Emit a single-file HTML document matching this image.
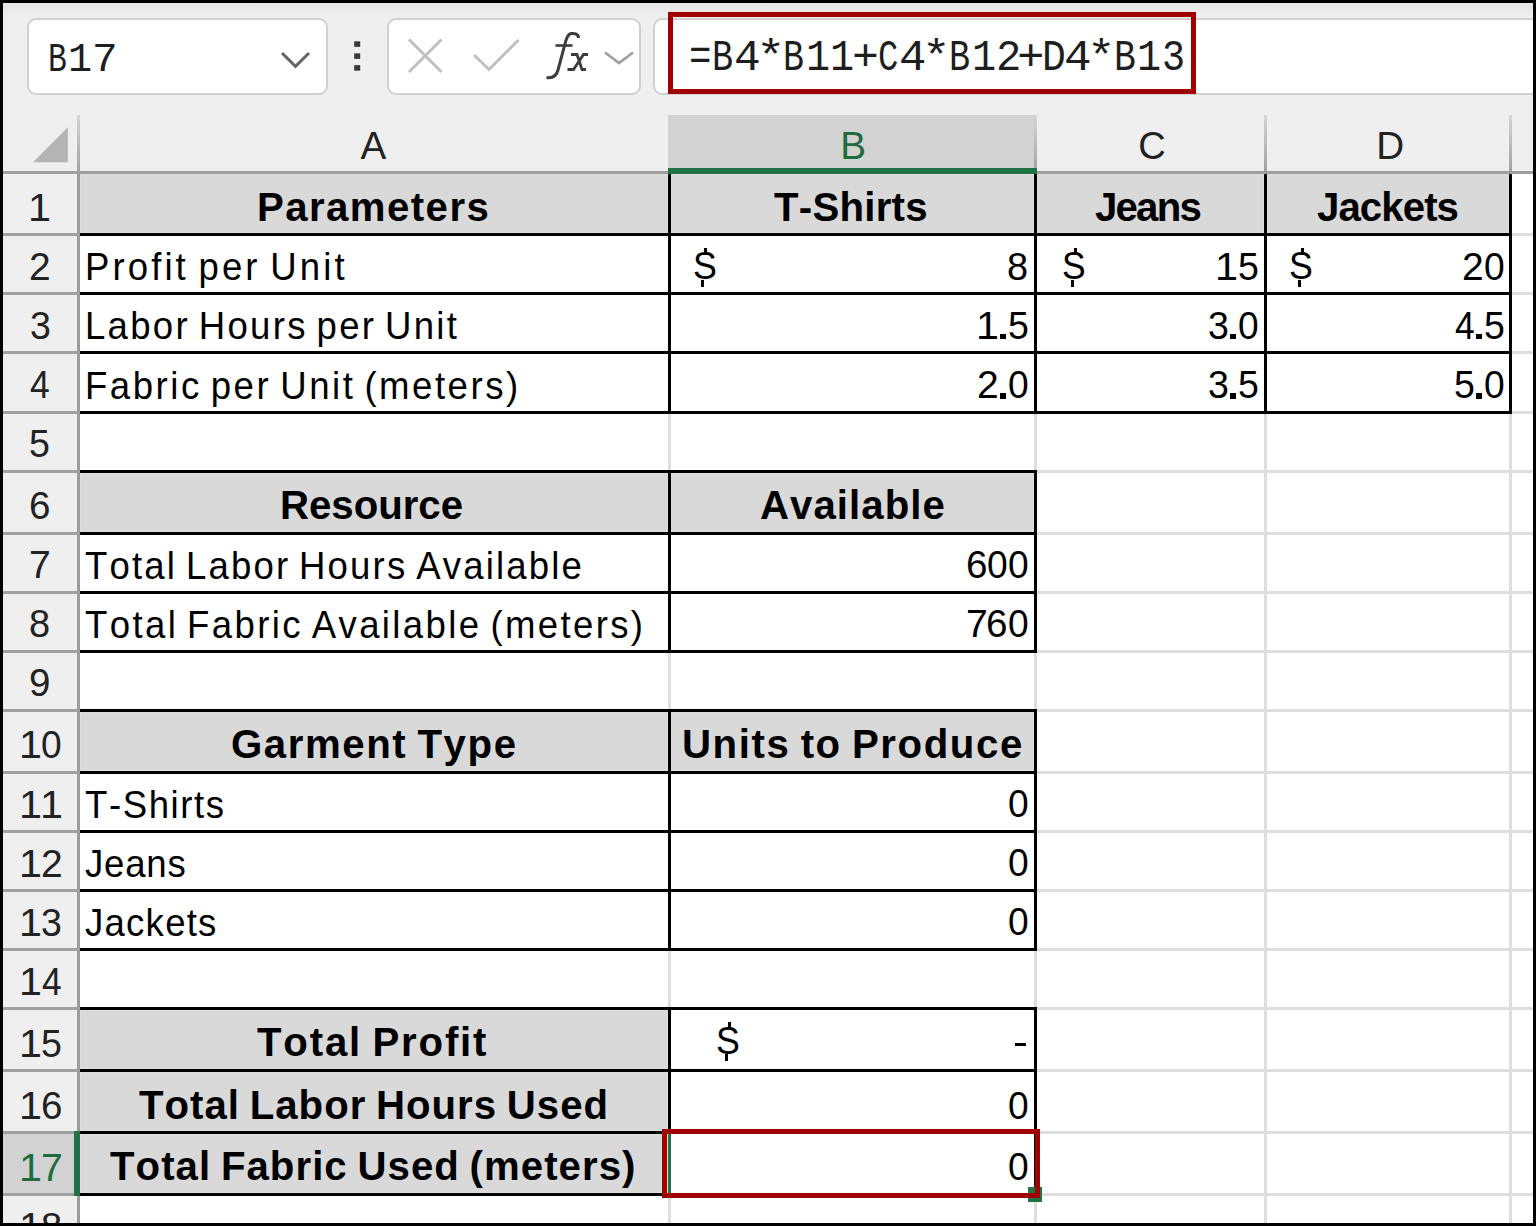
<!DOCTYPE html><html><head><meta charset="utf-8"><style>
html,body{margin:0;padding:0;}
body{width:1536px;height:1226px;background:#000;position:relative;overflow:hidden;font-family:"Liberation Sans",sans-serif;}
.r{position:absolute;}
.t{position:absolute;white-space:nowrap;transform-origin:0 0;font-kerning:none;font-variant-ligatures:none;}
.b{font-weight:bold;}
</style></head><body><div class="r" style="left:3.00px;top:3.00px;width:1530.00px;height:112.00px;background:#efefef;"></div><div class="r" style="left:3.00px;top:3.00px;width:1530.00px;height:14.00px;background:linear-gradient(#e6e6e6,#efefef);"></div><div class="r" style="left:26.90px;top:17.80px;width:300.80px;height:77.00px;background:#fff;border:2.8px solid #d0d0d0;box-sizing:border-box;border-radius:9px;"></div><span class="t" style="left:47.61px;top:39.94px;font-family:'Liberation Mono';font-weight:normal;font-size:40.53px;line-height:40.53px;color:#1e1e1e;transform:scaleX(0.7757);">B</span><span class="t" style="left:67.59px;top:39.94px;font-family:'Liberation Mono';font-weight:normal;font-size:40.53px;line-height:40.53px;color:#1e1e1e;transform:scaleX(0.9930);">1</span><span class="t" style="left:92.19px;top:39.94px;font-family:'Liberation Mono';font-weight:normal;font-size:40.53px;line-height:40.53px;color:#1e1e1e;transform:scaleX(1.0593);">7</span><svg class="r" style="left:0;top:0" width="700" height="110"><polyline points="282,53 295.5,66.3 309,53" fill="none" stroke="#666" stroke-width="3"/><rect x="354.2" y="41.3" width="6" height="5.6" fill="#3a3a3a"/><rect x="354.2" y="53.3" width="6" height="5.6" fill="#3a3a3a"/><rect x="354.2" y="65.1" width="6" height="5.6" fill="#3a3a3a"/></svg><div class="r" style="left:387.10px;top:17.80px;width:253.70px;height:77.00px;background:#fff;border:2.8px solid #d0d0d0;box-sizing:border-box;border-radius:9px;"></div><svg class="r" style="left:0;top:0" width="700" height="110"><path d="M409,39.5 L441.5,72 M441.5,39.5 L409,72" stroke="#c0c0c0" stroke-width="3" fill="none"/><polyline points="474,55 489,69.5 518.5,40" stroke="#c0c0c0" stroke-width="3" fill="none"/><polyline points="605,52.5 619,63 633,52.5" stroke="#a0a0a0" stroke-width="2.8" fill="none"/></svg><svg class="r" style="left:0;top:0" width="700" height="110" fill="none" stroke="#3c3c3c" stroke-width="3"><path d="M578.5,38 C578.5,34 575,33 571,33.5 C567.5,34.5 566.5,38 565.5,42 L558,70 C556.5,76 553,78.5 546.5,77.5"/><path d="M555.5,45.5 L572.5,45.5" stroke-width="2.6"/><path d="M571,54.5 L577,54.5 L582,69.5 L586,69.5 M588,54.5 L583.5,54.5 L573.5,69.5 L567.5,69.5" stroke-width="2.8"/></svg><div class="r" style="left:653.10px;top:17.80px;width:891.90px;height:77.00px;background:#fff;border:2.8px solid #d0d0d0;box-sizing:border-box;border-radius:9px;"></div><span class="t" style="left:688.98px;top:36.31px;font-family:'Liberation Mono';font-weight:normal;font-size:44.48px;line-height:44.48px;color:#1e1e1e;transform:scaleX(0.8422);">=</span><span class="t" style="left:712.42px;top:36.31px;font-family:'Liberation Mono';font-weight:normal;font-size:44.48px;line-height:44.48px;color:#1e1e1e;transform:scaleX(0.7906);">B</span><span class="t" style="left:734.06px;top:36.31px;font-family:'Liberation Mono';font-weight:normal;font-size:44.48px;line-height:44.48px;color:#1e1e1e;transform:scaleX(1.0001);">4</span><span class="t" style="left:756.04px;top:36.31px;font-family:'Liberation Mono';font-weight:normal;font-size:44.48px;line-height:44.48px;color:#1e1e1e;transform:scaleX(1.1070);">*</span><span class="t" style="left:783.33px;top:36.31px;font-family:'Liberation Mono';font-weight:normal;font-size:44.48px;line-height:44.48px;color:#1e1e1e;transform:scaleX(0.7860);">B</span><span class="t" style="left:805.99px;top:36.31px;font-family:'Liberation Mono';font-weight:normal;font-size:44.48px;line-height:44.48px;color:#1e1e1e;transform:scaleX(0.9049);">1</span><span class="t" style="left:830.09px;top:36.31px;font-family:'Liberation Mono';font-weight:normal;font-size:44.48px;line-height:44.48px;color:#1e1e1e;transform:scaleX(0.9049);">1</span><span class="t" style="left:852.06px;top:36.31px;font-family:'Liberation Mono';font-weight:normal;font-size:44.48px;line-height:44.48px;color:#1e1e1e;transform:scaleX(1.0087);">+</span><span class="t" style="left:878.03px;top:36.31px;font-family:'Liberation Mono';font-weight:normal;font-size:44.48px;line-height:44.48px;color:#1e1e1e;transform:scaleX(0.7606);">C</span><span class="t" style="left:899.30px;top:36.31px;font-family:'Liberation Mono';font-weight:normal;font-size:44.48px;line-height:44.48px;color:#1e1e1e;transform:scaleX(1.0271);">4</span><span class="t" style="left:922.24px;top:36.31px;font-family:'Liberation Mono';font-weight:normal;font-size:44.48px;line-height:44.48px;color:#1e1e1e;transform:scaleX(1.0693);">*</span><span class="t" style="left:948.62px;top:36.31px;font-family:'Liberation Mono';font-weight:normal;font-size:44.48px;line-height:44.48px;color:#1e1e1e;transform:scaleX(0.7906);">B</span><span class="t" style="left:971.89px;top:36.31px;font-family:'Liberation Mono';font-weight:normal;font-size:44.48px;line-height:44.48px;color:#1e1e1e;transform:scaleX(0.9049);">1</span><span class="t" style="left:995.83px;top:36.31px;font-family:'Liberation Mono';font-weight:normal;font-size:44.48px;line-height:44.48px;color:#1e1e1e;transform:scaleX(0.9502);">2</span><span class="t" style="left:1016.81px;top:36.31px;font-family:'Liberation Mono';font-weight:normal;font-size:44.48px;line-height:44.48px;color:#1e1e1e;transform:scaleX(1.0272);">+</span><span class="t" style="left:1042.05px;top:36.31px;font-family:'Liberation Mono';font-weight:normal;font-size:44.48px;line-height:44.48px;color:#1e1e1e;transform:scaleX(0.8940);">D</span><span class="t" style="left:1064.49px;top:36.31px;font-family:'Liberation Mono';font-weight:normal;font-size:44.48px;line-height:44.48px;color:#1e1e1e;transform:scaleX(1.0316);">4</span><span class="t" style="left:1087.44px;top:36.31px;font-family:'Liberation Mono';font-weight:normal;font-size:44.48px;line-height:44.48px;color:#1e1e1e;transform:scaleX(1.0693);">*</span><span class="t" style="left:1113.72px;top:36.31px;font-family:'Liberation Mono';font-weight:normal;font-size:44.48px;line-height:44.48px;color:#1e1e1e;transform:scaleX(0.8185);">B</span><span class="t" style="left:1137.19px;top:36.31px;font-family:'Liberation Mono';font-weight:normal;font-size:44.48px;line-height:44.48px;color:#1e1e1e;transform:scaleX(0.9049);">1</span><span class="t" style="left:1161.70px;top:36.31px;font-family:'Liberation Mono';font-weight:normal;font-size:44.48px;line-height:44.48px;color:#1e1e1e;transform:scaleX(0.8630);">3</span><div class="r" style="left:667.50px;top:11.70px;width:528.70px;height:82.70px;background:transparent;border:5.8px solid #a00000;box-sizing:border-box;"></div><div class="r" style="left:3.00px;top:115.00px;width:1530.00px;height:57.50px;background:#efefef;"></div><div class="r" style="left:667.60px;top:115.00px;width:369.40px;height:57.50px;background:#d2d2d2;"></div><div class="r" style="left:1034.00px;top:115.00px;width:3.00px;height:57.50px;background:linear-gradient(#d6d6d6,#a0a0a0);"></div><div class="r" style="left:1264.10px;top:115.00px;width:3.00px;height:57.50px;background:linear-gradient(#d6d6d6,#a0a0a0);"></div><div class="r" style="left:1509.30px;top:115.00px;width:3.00px;height:57.50px;background:linear-gradient(#d6d6d6,#a0a0a0);"></div><svg class="r" style="left:0;top:110px" width="80" height="60"><polygon points="67.9,17.3 67.9,52.2 33,52.2" fill="#b4b4b4"/></svg><div class="r" style="left:3.00px;top:171.00px;width:1530.00px;height:3.00px;background:#9f9f9f;"></div><div class="r" style="left:667.60px;top:168.40px;width:369.40px;height:5.80px;background:#217346;"></div><span class="t" style="left:360.61px;top:126.86px;font-family:'Liberation Sans';font-weight:normal;font-size:38.66px;line-height:38.66px;color:#222;transform:scaleX(1.0000);">A</span><span class="t" style="left:840.34px;top:126.86px;font-family:'Liberation Sans';font-weight:normal;font-size:38.66px;line-height:38.66px;color:#1d6b3e;transform:scaleX(1.0000);">B</span><span class="t" style="left:1138.20px;top:127.04px;font-family:'Liberation Sans';font-weight:normal;font-size:38.10px;line-height:38.10px;color:#222;transform:scaleX(1.0000);">C</span><span class="t" style="left:1376.18px;top:126.86px;font-family:'Liberation Sans';font-weight:normal;font-size:38.66px;line-height:38.66px;color:#222;transform:scaleX(1.0000);">D</span><div class="r" style="left:79.80px;top:174.00px;width:1453.20px;height:1049.00px;background:#ffffff;"></div><div class="r" style="left:3.00px;top:174.00px;width:73.80px;height:1049.00px;background:#efefef;"></div><div class="r" style="left:3.00px;top:1132.80px;width:76.80px;height:61.80px;background:#d2d2d2;"></div><div class="r" style="left:3.00px;top:233.20px;width:75.30px;height:3.00px;background:#a0a0a0;"></div><div class="r" style="left:3.00px;top:292.30px;width:75.30px;height:3.00px;background:#a0a0a0;"></div><div class="r" style="left:3.00px;top:351.30px;width:75.30px;height:3.00px;background:#a0a0a0;"></div><div class="r" style="left:3.00px;top:410.70px;width:75.30px;height:3.00px;background:#a0a0a0;"></div><div class="r" style="left:3.00px;top:469.70px;width:75.30px;height:3.00px;background:#a0a0a0;"></div><div class="r" style="left:3.00px;top:531.70px;width:75.30px;height:3.00px;background:#a0a0a0;"></div><div class="r" style="left:3.00px;top:590.70px;width:75.30px;height:3.00px;background:#a0a0a0;"></div><div class="r" style="left:3.00px;top:650.00px;width:75.30px;height:3.00px;background:#a0a0a0;"></div><div class="r" style="left:3.00px;top:709.00px;width:75.30px;height:3.00px;background:#a0a0a0;"></div><div class="r" style="left:3.00px;top:771.00px;width:75.30px;height:3.00px;background:#a0a0a0;"></div><div class="r" style="left:3.00px;top:830.10px;width:75.30px;height:3.00px;background:#a0a0a0;"></div><div class="r" style="left:3.00px;top:889.10px;width:75.30px;height:3.00px;background:#a0a0a0;"></div><div class="r" style="left:3.00px;top:948.10px;width:75.30px;height:3.00px;background:#a0a0a0;"></div><div class="r" style="left:3.00px;top:1007.10px;width:75.30px;height:3.00px;background:#a0a0a0;"></div><div class="r" style="left:3.00px;top:1069.10px;width:75.30px;height:3.00px;background:#a0a0a0;"></div><div class="r" style="left:3.00px;top:1131.30px;width:75.30px;height:3.00px;background:#a0a0a0;"></div><div class="r" style="left:3.00px;top:1193.10px;width:75.30px;height:3.00px;background:#a0a0a0;"></div><div class="r" style="left:76.80px;top:172.50px;width:3.00px;height:1050.50px;background:#9c9c9c;"></div><div class="r" style="left:76.80px;top:115.00px;width:3.00px;height:57.50px;background:linear-gradient(#d6d6d6,#a0a0a0);"></div><div class="r" style="left:79.80px;top:233.20px;width:1453.20px;height:3.00px;background:#dedede;"></div><div class="r" style="left:79.80px;top:292.30px;width:1453.20px;height:3.00px;background:#dedede;"></div><div class="r" style="left:79.80px;top:351.30px;width:1453.20px;height:3.00px;background:#dedede;"></div><div class="r" style="left:79.80px;top:410.70px;width:1453.20px;height:3.00px;background:#dedede;"></div><div class="r" style="left:79.80px;top:469.70px;width:1453.20px;height:3.00px;background:#dedede;"></div><div class="r" style="left:79.80px;top:531.70px;width:1453.20px;height:3.00px;background:#dedede;"></div><div class="r" style="left:79.80px;top:590.70px;width:1453.20px;height:3.00px;background:#dedede;"></div><div class="r" style="left:79.80px;top:650.00px;width:1453.20px;height:3.00px;background:#dedede;"></div><div class="r" style="left:79.80px;top:709.00px;width:1453.20px;height:3.00px;background:#dedede;"></div><div class="r" style="left:79.80px;top:771.00px;width:1453.20px;height:3.00px;background:#dedede;"></div><div class="r" style="left:79.80px;top:830.10px;width:1453.20px;height:3.00px;background:#dedede;"></div><div class="r" style="left:79.80px;top:889.10px;width:1453.20px;height:3.00px;background:#dedede;"></div><div class="r" style="left:79.80px;top:948.10px;width:1453.20px;height:3.00px;background:#dedede;"></div><div class="r" style="left:79.80px;top:1007.10px;width:1453.20px;height:3.00px;background:#dedede;"></div><div class="r" style="left:79.80px;top:1069.10px;width:1453.20px;height:3.00px;background:#dedede;"></div><div class="r" style="left:79.80px;top:1131.30px;width:1453.20px;height:3.00px;background:#dedede;"></div><div class="r" style="left:79.80px;top:1193.10px;width:1453.20px;height:3.00px;background:#dedede;"></div><div class="r" style="left:667.60px;top:174.00px;width:3.00px;height:1049.00px;background:#dedede;"></div><div class="r" style="left:1034.00px;top:174.00px;width:3.00px;height:1049.00px;background:#dedede;"></div><div class="r" style="left:1264.10px;top:174.00px;width:3.00px;height:1049.00px;background:#dedede;"></div><div class="r" style="left:1509.30px;top:174.00px;width:3.00px;height:1049.00px;background:#dedede;"></div><div class="r" style="left:79.80px;top:174.00px;width:587.80px;height:59.20px;background:#dfdfdf;"></div><div class="r" style="left:80.60px;top:174.80px;width:586.20px;height:57.60px;background:#d9d9d9;"></div><div class="r" style="left:670.60px;top:174.00px;width:363.40px;height:59.20px;background:#dfdfdf;"></div><div class="r" style="left:671.40px;top:174.80px;width:361.80px;height:57.60px;background:#d9d9d9;"></div><div class="r" style="left:1037.00px;top:174.00px;width:227.10px;height:59.20px;background:#dfdfdf;"></div><div class="r" style="left:1037.80px;top:174.80px;width:225.50px;height:57.60px;background:#d9d9d9;"></div><div class="r" style="left:1267.10px;top:174.00px;width:242.20px;height:59.20px;background:#dfdfdf;"></div><div class="r" style="left:1267.90px;top:174.80px;width:240.60px;height:57.60px;background:#d9d9d9;"></div><div class="r" style="left:79.80px;top:472.70px;width:587.80px;height:59.00px;background:#dfdfdf;"></div><div class="r" style="left:80.60px;top:473.50px;width:586.20px;height:57.40px;background:#d9d9d9;"></div><div class="r" style="left:670.60px;top:472.70px;width:363.40px;height:59.00px;background:#dfdfdf;"></div><div class="r" style="left:671.40px;top:473.50px;width:361.80px;height:57.40px;background:#d9d9d9;"></div><div class="r" style="left:79.80px;top:712.00px;width:587.80px;height:59.00px;background:#dfdfdf;"></div><div class="r" style="left:80.60px;top:712.80px;width:586.20px;height:57.40px;background:#d9d9d9;"></div><div class="r" style="left:670.60px;top:712.00px;width:363.40px;height:59.00px;background:#dfdfdf;"></div><div class="r" style="left:671.40px;top:712.80px;width:361.80px;height:57.40px;background:#d9d9d9;"></div><div class="r" style="left:79.80px;top:1010.10px;width:587.80px;height:59.00px;background:#dfdfdf;"></div><div class="r" style="left:80.60px;top:1010.90px;width:586.20px;height:57.40px;background:#d9d9d9;"></div><div class="r" style="left:79.80px;top:1072.10px;width:587.80px;height:59.20px;background:#dfdfdf;"></div><div class="r" style="left:80.60px;top:1072.90px;width:586.20px;height:57.60px;background:#d9d9d9;"></div><div class="r" style="left:79.80px;top:1134.30px;width:587.80px;height:58.80px;background:#dfdfdf;"></div><div class="r" style="left:80.60px;top:1135.10px;width:586.20px;height:57.20px;background:#d9d9d9;"></div><div class="r" style="left:79.80px;top:170.90px;width:1432.50px;height:3.20px;background:#000;"></div><div class="r" style="left:79.80px;top:233.10px;width:1432.50px;height:3.20px;background:#000;"></div><div class="r" style="left:79.80px;top:292.20px;width:1432.50px;height:3.20px;background:#000;"></div><div class="r" style="left:79.80px;top:351.20px;width:1432.50px;height:3.20px;background:#000;"></div><div class="r" style="left:79.80px;top:410.60px;width:1432.50px;height:3.20px;background:#000;"></div><div class="r" style="left:667.50px;top:171.00px;width:3.20px;height:242.70px;background:#000;"></div><div class="r" style="left:1033.90px;top:171.00px;width:3.20px;height:242.70px;background:#000;"></div><div class="r" style="left:1264.00px;top:171.00px;width:3.20px;height:242.70px;background:#000;"></div><div class="r" style="left:1509.20px;top:171.00px;width:3.20px;height:242.70px;background:#000;"></div><div class="r" style="left:79.80px;top:469.60px;width:957.20px;height:3.20px;background:#000;"></div><div class="r" style="left:79.80px;top:531.60px;width:957.20px;height:3.20px;background:#000;"></div><div class="r" style="left:79.80px;top:590.60px;width:957.20px;height:3.20px;background:#000;"></div><div class="r" style="left:79.80px;top:649.90px;width:957.20px;height:3.20px;background:#000;"></div><div class="r" style="left:667.50px;top:469.70px;width:3.20px;height:183.30px;background:#000;"></div><div class="r" style="left:1033.90px;top:469.70px;width:3.20px;height:183.30px;background:#000;"></div><div class="r" style="left:79.80px;top:708.90px;width:957.20px;height:3.20px;background:#000;"></div><div class="r" style="left:79.80px;top:770.90px;width:957.20px;height:3.20px;background:#000;"></div><div class="r" style="left:79.80px;top:830.00px;width:957.20px;height:3.20px;background:#000;"></div><div class="r" style="left:79.80px;top:889.00px;width:957.20px;height:3.20px;background:#000;"></div><div class="r" style="left:79.80px;top:948.00px;width:957.20px;height:3.20px;background:#000;"></div><div class="r" style="left:667.50px;top:709.00px;width:3.20px;height:242.10px;background:#000;"></div><div class="r" style="left:1033.90px;top:709.00px;width:3.20px;height:242.10px;background:#000;"></div><div class="r" style="left:79.80px;top:1007.00px;width:957.20px;height:3.20px;background:#000;"></div><div class="r" style="left:79.80px;top:1069.00px;width:957.20px;height:3.20px;background:#000;"></div><div class="r" style="left:79.80px;top:1131.20px;width:957.20px;height:3.20px;background:#000;"></div><div class="r" style="left:79.80px;top:1193.00px;width:957.20px;height:3.20px;background:#000;"></div><div class="r" style="left:667.50px;top:1007.10px;width:3.20px;height:189.00px;background:#000;"></div><div class="r" style="left:1033.90px;top:1007.10px;width:3.20px;height:189.00px;background:#000;"></div><div class="r" style="left:78.30px;top:171.00px;width:1454.70px;height:3.00px;background:#9f9f9f;"></div><div class="r" style="left:667.60px;top:168.40px;width:369.40px;height:5.80px;background:#217346;"></div><span class="t" style="left:692.58px;top:248.47px;font-family:'Liberation Sans';font-weight:normal;font-size:37.95px;line-height:37.95px;color:#000;transform:scaleX(0.9429);">S</span><div class="r" style="left:704.40px;top:248.10px;width:3.00px;height:7.00px;background:#000;"></div><div class="r" style="left:701.40px;top:279.60px;width:3.00px;height:7.00px;background:#000;"></div><span class="t" style="left:1061.89px;top:248.47px;font-family:'Liberation Sans';font-weight:normal;font-size:37.95px;line-height:37.95px;color:#000;transform:scaleX(0.9337);">S</span><div class="r" style="left:1073.50px;top:248.10px;width:3.00px;height:7.00px;background:#000;"></div><div class="r" style="left:1070.50px;top:279.60px;width:3.00px;height:7.00px;background:#000;"></div><span class="t" style="left:1289.48px;top:248.47px;font-family:'Liberation Sans';font-weight:normal;font-size:37.95px;line-height:37.95px;color:#000;transform:scaleX(0.9429);">S</span><div class="r" style="left:1301.20px;top:248.10px;width:3.00px;height:7.00px;background:#000;"></div><div class="r" style="left:1298.10px;top:279.60px;width:3.00px;height:7.00px;background:#000;"></div><span class="t" style="left:27.85px;top:188.66px;font-family:'Liberation Sans';font-weight:normal;font-size:38.66px;line-height:38.66px;color:#222;transform:scaleX(1.0678);">1</span><span class="t" style="left:29.02px;top:247.76px;font-family:'Liberation Sans';font-weight:normal;font-size:38.66px;line-height:38.66px;color:#222;transform:scaleX(1.0106);">2</span><span class="t" style="left:29.56px;top:306.76px;font-family:'Liberation Sans';font-weight:normal;font-size:38.66px;line-height:38.66px;color:#222;transform:scaleX(0.9710);">3</span><span class="t" style="left:30.18px;top:366.16px;font-family:'Liberation Sans';font-weight:normal;font-size:38.66px;line-height:38.66px;color:#222;transform:scaleX(0.9136);">4</span><span class="t" style="left:29.49px;top:425.16px;font-family:'Liberation Sans';font-weight:normal;font-size:38.66px;line-height:38.66px;color:#222;transform:scaleX(0.9710);">5</span><span class="t" style="left:29.03px;top:487.16px;font-family:'Liberation Sans';font-weight:normal;font-size:38.66px;line-height:38.66px;color:#222;transform:scaleX(0.9977);">6</span><span class="t" style="left:28.98px;top:546.16px;font-family:'Liberation Sans';font-weight:normal;font-size:38.66px;line-height:38.66px;color:#222;transform:scaleX(1.0127);">7</span><span class="t" style="left:29.34px;top:605.46px;font-family:'Liberation Sans';font-weight:normal;font-size:38.66px;line-height:38.66px;color:#222;transform:scaleX(0.9811);">8</span><span class="t" style="left:29.18px;top:664.46px;font-family:'Liberation Sans';font-weight:normal;font-size:38.66px;line-height:38.66px;color:#222;transform:scaleX(0.9967);">9</span><span class="t" style="left:41.39px;top:726.46px;font-family:'Liberation Sans';font-weight:normal;font-size:38.66px;line-height:38.66px;color:#222;transform:scaleX(0.9631);">0</span><span class="t" style="left:18.98px;top:726.46px;font-family:'Liberation Sans';font-weight:normal;font-size:38.66px;line-height:38.66px;color:#222;transform:scaleX(1.0678);">1</span><span class="t" style="left:39.70px;top:785.56px;font-family:'Liberation Sans';font-weight:normal;font-size:38.66px;line-height:38.66px;color:#222;transform:scaleX(1.0678);">1</span><span class="t" style="left:18.98px;top:785.56px;font-family:'Liberation Sans';font-weight:normal;font-size:38.66px;line-height:38.66px;color:#222;transform:scaleX(1.0678);">1</span><span class="t" style="left:40.87px;top:844.56px;font-family:'Liberation Sans';font-weight:normal;font-size:38.66px;line-height:38.66px;color:#222;transform:scaleX(1.0106);">2</span><span class="t" style="left:18.98px;top:844.56px;font-family:'Liberation Sans';font-weight:normal;font-size:38.66px;line-height:38.66px;color:#222;transform:scaleX(1.0678);">1</span><span class="t" style="left:41.41px;top:903.56px;font-family:'Liberation Sans';font-weight:normal;font-size:38.66px;line-height:38.66px;color:#222;transform:scaleX(0.9710);">3</span><span class="t" style="left:18.98px;top:903.56px;font-family:'Liberation Sans';font-weight:normal;font-size:38.66px;line-height:38.66px;color:#222;transform:scaleX(1.0678);">1</span><span class="t" style="left:42.03px;top:962.56px;font-family:'Liberation Sans';font-weight:normal;font-size:38.66px;line-height:38.66px;color:#222;transform:scaleX(0.9136);">4</span><span class="t" style="left:18.98px;top:962.56px;font-family:'Liberation Sans';font-weight:normal;font-size:38.66px;line-height:38.66px;color:#222;transform:scaleX(1.0678);">1</span><span class="t" style="left:41.34px;top:1024.56px;font-family:'Liberation Sans';font-weight:normal;font-size:38.66px;line-height:38.66px;color:#222;transform:scaleX(0.9710);">5</span><span class="t" style="left:18.98px;top:1024.56px;font-family:'Liberation Sans';font-weight:normal;font-size:38.66px;line-height:38.66px;color:#222;transform:scaleX(1.0678);">1</span><span class="t" style="left:40.88px;top:1086.76px;font-family:'Liberation Sans';font-weight:normal;font-size:38.66px;line-height:38.66px;color:#222;transform:scaleX(0.9977);">6</span><span class="t" style="left:18.98px;top:1086.76px;font-family:'Liberation Sans';font-weight:normal;font-size:38.66px;line-height:38.66px;color:#222;transform:scaleX(1.0678);">1</span><span class="t" style="left:40.83px;top:1148.56px;font-family:'Liberation Sans';font-weight:normal;font-size:38.66px;line-height:38.66px;color:#1d6b3e;transform:scaleX(1.0127);">7</span><span class="t" style="left:18.98px;top:1148.56px;font-family:'Liberation Sans';font-weight:normal;font-size:38.66px;line-height:38.66px;color:#1d6b3e;transform:scaleX(1.0678);">1</span><span class="t" style="left:41.19px;top:1208.36px;font-family:'Liberation Sans';font-weight:normal;font-size:38.66px;line-height:38.66px;color:#222;transform:scaleX(0.9811);">8</span><span class="t" style="left:18.98px;top:1208.36px;font-family:'Liberation Sans';font-weight:normal;font-size:38.66px;line-height:38.66px;color:#222;transform:scaleX(1.0678);">1</span><div class="r" style="left:73.80px;top:1131.30px;width:6.00px;height:64.80px;background:#217346;"></div><span class="t" style="left:256.81px;top:186.59px;font-family:'Liberation Sans';font-weight:bold;font-size:40.99px;line-height:40.99px;color:#000;letter-spacing:1.472px;transform:scaleX(0.9800);">Parameters</span><span class="t" style="left:774.05px;top:186.59px;font-family:'Liberation Sans';font-weight:bold;font-size:40.99px;line-height:40.99px;color:#000;letter-spacing:0.269px;transform:scaleX(0.9800);">T-Shirts</span><span class="t" style="left:1095.39px;top:186.59px;font-family:'Liberation Sans';font-weight:bold;font-size:40.99px;line-height:40.99px;color:#000;letter-spacing:-1.822px;transform:scaleX(0.9800);">Jeans</span><span class="t" style="left:1316.69px;top:186.59px;font-family:'Liberation Sans';font-weight:bold;font-size:40.99px;line-height:40.99px;color:#000;letter-spacing:-0.929px;transform:scaleX(0.9800);">Jackets</span><span class="t" style="left:85.20px;top:248.16px;font-family:'Liberation Sans';font-weight:normal;font-size:38.08px;line-height:38.08px;color:#000;letter-spacing:3.220px;word-spacing:-3.750px;transform:scaleX(0.9600);">Profit per Unit</span><span class="t" style="left:84.60px;top:307.16px;font-family:'Liberation Sans';font-weight:normal;font-size:38.08px;line-height:38.08px;color:#000;letter-spacing:2.380px;word-spacing:-3.750px;transform:scaleX(0.9600);">Labor Hours per Unit</span><span class="t" style="left:84.60px;top:366.56px;font-family:'Liberation Sans';font-weight:normal;font-size:38.08px;line-height:38.08px;color:#000;letter-spacing:2.626px;word-spacing:-3.750px;transform:scaleX(0.9600);">Fabric per Unit (meters)</span><span class="t" style="left:1007.39px;top:247.66px;font-family:'Liberation Sans';font-weight:normal;font-size:38.66px;line-height:38.66px;color:#000;transform:scaleX(0.9811);">8</span><span class="t" style="left:1007.54px;top:306.66px;font-family:'Liberation Sans';font-weight:normal;font-size:38.66px;line-height:38.66px;color:#000;transform:scaleX(0.9710);">5</span><div class="r" style="left:1000.14px;top:333.90px;width:6.00px;height:5.50px;background:#000;"></div><span class="t" style="left:976.30px;top:306.66px;font-family:'Liberation Sans';font-weight:normal;font-size:38.66px;line-height:38.66px;color:#000;transform:scaleX(1.0678);">1</span><span class="t" style="left:1007.59px;top:366.06px;font-family:'Liberation Sans';font-weight:normal;font-size:38.66px;line-height:38.66px;color:#000;transform:scaleX(0.9631);">0</span><div class="r" style="left:1000.14px;top:393.30px;width:6.00px;height:5.50px;background:#000;"></div><span class="t" style="left:977.47px;top:366.06px;font-family:'Liberation Sans';font-weight:normal;font-size:38.66px;line-height:38.66px;color:#000;transform:scaleX(1.0106);">2</span><span class="t" style="left:1237.84px;top:247.66px;font-family:'Liberation Sans';font-weight:normal;font-size:38.66px;line-height:38.66px;color:#000;transform:scaleX(0.9710);">5</span><span class="t" style="left:1215.48px;top:247.66px;font-family:'Liberation Sans';font-weight:normal;font-size:38.66px;line-height:38.66px;color:#000;transform:scaleX(1.0678);">1</span><span class="t" style="left:1237.89px;top:306.66px;font-family:'Liberation Sans';font-weight:normal;font-size:38.66px;line-height:38.66px;color:#000;transform:scaleX(0.9631);">0</span><div class="r" style="left:1230.44px;top:333.90px;width:6.00px;height:5.50px;background:#000;"></div><span class="t" style="left:1208.31px;top:306.66px;font-family:'Liberation Sans';font-weight:normal;font-size:38.66px;line-height:38.66px;color:#000;transform:scaleX(0.9710);">3</span><span class="t" style="left:1237.84px;top:366.06px;font-family:'Liberation Sans';font-weight:normal;font-size:38.66px;line-height:38.66px;color:#000;transform:scaleX(0.9710);">5</span><div class="r" style="left:1230.44px;top:393.30px;width:6.00px;height:5.50px;background:#000;"></div><span class="t" style="left:1208.31px;top:366.06px;font-family:'Liberation Sans';font-weight:normal;font-size:38.66px;line-height:38.66px;color:#000;transform:scaleX(0.9710);">3</span><span class="t" style="left:1483.69px;top:247.66px;font-family:'Liberation Sans';font-weight:normal;font-size:38.66px;line-height:38.66px;color:#000;transform:scaleX(0.9631);">0</span><span class="t" style="left:1462.45px;top:247.66px;font-family:'Liberation Sans';font-weight:normal;font-size:38.66px;line-height:38.66px;color:#000;transform:scaleX(1.0106);">2</span><span class="t" style="left:1483.64px;top:306.66px;font-family:'Liberation Sans';font-weight:normal;font-size:38.66px;line-height:38.66px;color:#000;transform:scaleX(0.9710);">5</span><div class="r" style="left:1476.24px;top:333.90px;width:6.00px;height:5.50px;background:#000;"></div><span class="t" style="left:1454.73px;top:306.66px;font-family:'Liberation Sans';font-weight:normal;font-size:38.66px;line-height:38.66px;color:#000;transform:scaleX(0.9136);">4</span><span class="t" style="left:1483.69px;top:366.06px;font-family:'Liberation Sans';font-weight:normal;font-size:38.66px;line-height:38.66px;color:#000;transform:scaleX(0.9631);">0</span><div class="r" style="left:1476.24px;top:393.30px;width:6.00px;height:5.50px;background:#000;"></div><span class="t" style="left:1454.04px;top:366.06px;font-family:'Liberation Sans';font-weight:normal;font-size:38.66px;line-height:38.66px;color:#000;transform:scaleX(0.9710);">5</span><span class="t" style="left:280.31px;top:485.09px;font-family:'Liberation Sans';font-weight:bold;font-size:40.99px;line-height:40.99px;color:#000;letter-spacing:-0.002px;transform:scaleX(0.9800);">Resource</span><span class="t" style="left:760.00px;top:485.09px;font-family:'Liberation Sans';font-weight:bold;font-size:40.99px;line-height:40.99px;color:#000;letter-spacing:1.082px;transform:scaleX(0.9800);">Available</span><span class="t" style="left:85.18px;top:546.56px;font-family:'Liberation Sans';font-weight:normal;font-size:38.08px;line-height:38.08px;color:#000;letter-spacing:2.268px;word-spacing:-3.750px;transform:scaleX(0.9600);">Total Labor Hours Available</span><span class="t" style="left:85.18px;top:605.86px;font-family:'Liberation Sans';font-weight:normal;font-size:38.08px;line-height:38.08px;color:#000;letter-spacing:2.470px;word-spacing:-3.750px;transform:scaleX(0.9600);">Total Fabric Available (meters)</span><span class="t" style="left:1007.59px;top:546.06px;font-family:'Liberation Sans';font-weight:normal;font-size:38.66px;line-height:38.66px;color:#000;transform:scaleX(0.9631);">0</span><span class="t" style="left:986.87px;top:546.06px;font-family:'Liberation Sans';font-weight:normal;font-size:38.66px;line-height:38.66px;color:#000;transform:scaleX(0.9631);">0</span><span class="t" style="left:965.64px;top:546.06px;font-family:'Liberation Sans';font-weight:normal;font-size:38.66px;line-height:38.66px;color:#000;transform:scaleX(0.9977);">6</span><span class="t" style="left:1007.59px;top:605.36px;font-family:'Liberation Sans';font-weight:normal;font-size:38.66px;line-height:38.66px;color:#000;transform:scaleX(0.9631);">0</span><span class="t" style="left:986.36px;top:605.36px;font-family:'Liberation Sans';font-weight:normal;font-size:38.66px;line-height:38.66px;color:#000;transform:scaleX(0.9977);">6</span><span class="t" style="left:965.59px;top:605.36px;font-family:'Liberation Sans';font-weight:normal;font-size:38.66px;line-height:38.66px;color:#000;transform:scaleX(1.0127);">7</span><span class="t" style="left:231.35px;top:724.39px;font-family:'Liberation Sans';font-weight:bold;font-size:40.99px;line-height:40.99px;color:#000;letter-spacing:1.616px;word-spacing:-2.551px;transform:scaleX(0.9800);">Garment Type</span><span class="t" style="left:682.09px;top:724.39px;font-family:'Liberation Sans';font-weight:bold;font-size:40.99px;line-height:40.99px;color:#000;letter-spacing:1.627px;word-spacing:-2.551px;transform:scaleX(0.9800);">Units to Produce</span><span class="t" style="left:85.18px;top:785.96px;font-family:'Liberation Sans';font-weight:normal;font-size:38.08px;line-height:38.08px;color:#000;letter-spacing:1.665px;transform:scaleX(0.9600);">T-Shirts</span><span class="t" style="left:85.43px;top:844.96px;font-family:'Liberation Sans';font-weight:normal;font-size:38.08px;line-height:38.08px;color:#000;letter-spacing:0.843px;transform:scaleX(0.9600);">Jeans</span><span class="t" style="left:85.43px;top:903.96px;font-family:'Liberation Sans';font-weight:normal;font-size:38.08px;line-height:38.08px;color:#000;letter-spacing:1.294px;transform:scaleX(0.9600);">Jackets</span><span class="t" style="left:1007.59px;top:785.46px;font-family:'Liberation Sans';font-weight:normal;font-size:38.66px;line-height:38.66px;color:#000;transform:scaleX(0.9631);">0</span><span class="t" style="left:1007.59px;top:844.46px;font-family:'Liberation Sans';font-weight:normal;font-size:38.66px;line-height:38.66px;color:#000;transform:scaleX(0.9631);">0</span><span class="t" style="left:1007.59px;top:903.46px;font-family:'Liberation Sans';font-weight:normal;font-size:38.66px;line-height:38.66px;color:#000;transform:scaleX(0.9631);">0</span><span class="t" style="left:257.05px;top:1022.49px;font-family:'Liberation Sans';font-weight:bold;font-size:40.99px;line-height:40.99px;color:#000;letter-spacing:1.851px;word-spacing:-2.551px;transform:scaleX(0.9800);">Total Profit</span><span class="t" style="left:139.05px;top:1084.69px;font-family:'Liberation Sans';font-weight:bold;font-size:40.99px;line-height:40.99px;color:#000;letter-spacing:1.035px;word-spacing:-2.551px;transform:scaleX(0.9800);">Total Labor Hours Used</span><span class="t" style="left:109.55px;top:1146.49px;font-family:'Liberation Sans';font-weight:bold;font-size:40.99px;line-height:40.99px;color:#000;letter-spacing:1.071px;word-spacing:-2.551px;transform:scaleX(0.9800);">Total Fabric Used (meters)</span><span class="t" style="left:716.48px;top:1022.57px;font-family:'Liberation Sans';font-weight:normal;font-size:37.95px;line-height:37.95px;color:#000;transform:scaleX(0.9429);">S</span><div class="r" style="left:727.80px;top:1022.20px;width:3.00px;height:7.00px;background:#000;"></div><div class="r" style="left:725.10px;top:1053.70px;width:3.00px;height:7.00px;background:#000;"></div><div class="r" style="left:1015.00px;top:1042.80px;width:11.00px;height:3.10px;background:#000;"></div><span class="t" style="left:1007.59px;top:1086.66px;font-family:'Liberation Sans';font-weight:normal;font-size:38.66px;line-height:38.66px;color:#000;transform:scaleX(0.9631);">0</span><span class="t" style="left:1007.59px;top:1148.46px;font-family:'Liberation Sans';font-weight:normal;font-size:38.66px;line-height:38.66px;color:#000;transform:scaleX(0.9631);">0</span><div class="r" style="left:667.60px;top:1134.30px;width:3.00px;height:58.80px;background:#217346;"></div><div class="r" style="left:1028.30px;top:1187.30px;width:14.20px;height:15.10px;background:#217346;"></div><div class="r" style="left:661.90px;top:1128.50px;width:377.90px;height:69.80px;background:transparent;border:5.5px solid #a00000;box-sizing:border-box;"></div><div class="r" style="left:0.00px;top:0.00px;width:1536.00px;height:3.00px;background:#000;"></div><div class="r" style="left:0.00px;top:1223.00px;width:1536.00px;height:3.00px;background:#000;"></div><div class="r" style="left:0.00px;top:0.00px;width:3.00px;height:1226.00px;background:#000;"></div><div class="r" style="left:1533.00px;top:0.00px;width:3.00px;height:1226.00px;background:#000;"></div></body></html>
